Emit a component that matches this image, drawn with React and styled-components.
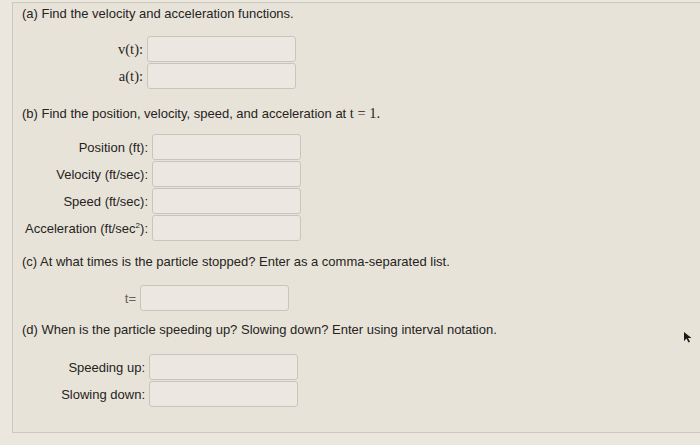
import React from "react";
import styled, { createGlobalStyle } from "styled-components";

const GlobalStyle = createGlobalStyle`
  html, body {
    margin: 0;
    padding: 0;
    background: #ebe7de;
  }
  body {
    width: 700px;
    height: 445px;
    overflow: hidden;
    font-family: "Liberation Sans", Arial, sans-serif;
    color: #252421;
  }
`;

const Page = styled.div`
  position: relative;
  width: 700px;
  height: 445px;
  padding: 2px 0 0 12px;
  box-sizing: border-box;
`;

const Panel = styled.div`
  width: 720px;
  height: 431px;
  box-sizing: border-box;
  background: #e8e3d9;
  border: 1px solid #cdc8be;
  border-right: none;
  padding: 1px 0 0 9px;
`;

const Heading = styled.div`
  font-size: 13px;
  line-height: 20px;
  margin-bottom: ${(p) => p.$after}px;
  white-space: nowrap;
`;

const Math = styled.span`
  font-family: "Liberation Serif", "Times New Roman", serif;
  font-size: 14.5px;
`;

const Group = styled.div`
  display: grid;
  grid-template-columns: ${(p) => p.$labelWidth}px 149px;
  column-gap: 4px;
  row-gap: 1px;
  align-items: center;
  margin-bottom: ${(p) => p.$after}px;
`;

const Label = styled.label`
  text-align: right;
  font-size: ${(p) => (p.$serif ? "14.5px" : "13px")};
  font-family: ${(p) =>
    p.$serif
      ? `"Liberation Serif", "Times New Roman", serif`
      : `"Liberation Sans", Arial, sans-serif`};
  white-space: nowrap;
  color: ${(p) => (p.$faint ? "#64625c" : "#252421")};
`;

const Field = styled.input`
  box-sizing: border-box;
  width: 149px;
  height: 26px;
  border: 1px solid #c9c5bc;
  border-radius: 3px;
  background: #ece8e1;
  outline: none;
`;

const Sup = styled.sup`
  font-size: 8px;
  line-height: 0;
`;

const Cursor = styled.svg`
  position: absolute;
  left: 683px;
  top: 331px;
`;

function Row({ label, serif, faint }) {
  return (
    <>
      <Label $serif={serif} $faint={faint}>{label}</Label>
      <Field type="text" />
    </>
  );
}

export default function App() {
  return (
    <>
      <GlobalStyle />
      <Page>
        <Panel>
          <Heading $after={12}>(a) Find the velocity and acceleration functions.</Heading>
          <Group $labelWidth={121} $after={14}>
            <Row label="v(t):" serif />
            <Row label="a(t):" serif />
          </Group>

          <Heading $after={10}>
            (b) Find the position, velocity, speed, and acceleration at <Math>t = 1.</Math>
          </Heading>
          <Group $labelWidth={126} $after={11}>
            <Row label="Position (ft):" />
            <Row label="Velocity (ft/sec):" />
            <Row label="Speed (ft/sec):" />
            <Row
              label={
                <>
                  Acceleration (ft/sec<Sup>2</Sup>):
                </>
              }
            />
          </Group>

          <Heading $after={13}>
            (c) At what times is the particle stopped? Enter as a comma-separated list.
          </Heading>
          <Group $labelWidth={114} $after={9}>
            <Row label="t=" faint />
          </Group>

          <Heading $after={14}>
            (d) When is the particle speeding up? Slowing down? Enter using interval notation.
          </Heading>
          <Group $labelWidth={123} $after={0}>
            <Row label="Speeding up:" />
            <Row label="Slowing down:" />
          </Group>
        </Panel>
        <Cursor width="9" height="12" viewBox="0 0 9 12">
          <path d="M1 1 L1 10 L3.5 7.5 L5.5 11.5 L7 10.8 L5 7 L8.5 7 Z" fill="#1a1a1a" />
        </Cursor>
      </Page>
    </>
  );
}
